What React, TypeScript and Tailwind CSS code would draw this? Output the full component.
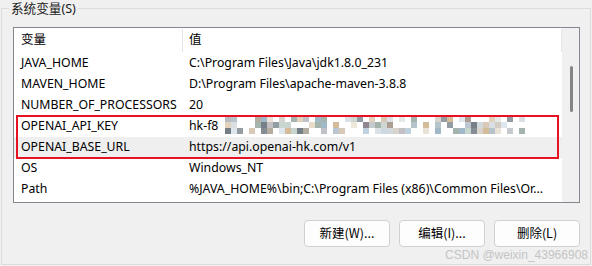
import React from "react";

const rows: { name: string; value: string; selected?: boolean; mosaic?: boolean }[] = [
  { name: "JAVA_HOME", value: "C:\\Program Files\\Java\\jdk1.8.0_231" },
  { name: "MAVEN_HOME", value: "D:\\Program Files\\apache-maven-3.8.8" },
  { name: "NUMBER_OF_PROCESSORS", value: "20" },
  { name: "OPENAI_API_KEY", value: "hk-f8", mosaic: true },
  { name: "OPENAI_BASE_URL", value: "https://api.openai-hk.com/v1", selected: true },
  { name: "OS", value: "Windows_NT" },
  { name: "Path", value: "%JAVA_HOME%\\bin;C:\\Program Files (x86)\\Common Files\\Or..." },
];

const palette = [
  "#8d969e", "#b1a89b", "#bcd0dc", "#9fb0a8", "#d6c6b2", "#7d868e", "#b3c0c8",
  "#e0cfb8", "#9cb4c6", "#a8998b", "#c6d4ce", "#6f7880", "#d2b896", "#b8c3cf",
  "#8a7f8a", "#a7b6bd",
];

function Mosaic() {
  const cells: React.ReactElement[] = [];
  let seed = 987654;
  const rnd = () => {
    seed = (seed * 1103515245 + 12345) % 2147483648;
    return seed / 2147483648;
  };
  const bs = 6;
  for (let r = 0; r < 3; r++) {
    for (let c = 0; c < 50; c++) {
      const p = rnd();
      const edge = c > 46 ? 0.3 : c > 2 && c < 5 ? 0.1 : 0.68;
      if (p < edge) {
        const col = palette[Math.floor(rnd() * palette.length)];
        const light = rnd() < 0.3;
        cells.push(
          <rect
            key={`${r}-${c}`}
            x={c * bs}
            y={r * bs}
            width={bs}
            height={bs}
            fill={col}
            opacity={light ? 0.5 : 0.95}
          />
        );
      }
    }
  }
  return (
    <svg width={300} height={20} className="absolute left-[36px] top-0" aria-hidden>
      {cells}
    </svg>
  );
}

export default function App() {
  const font = { fontFamily: '"Noto Sans", "Noto Sans CJK SC", sans-serif' };
  return (
    <div
      className="w-[592px] h-[266px] bg-[#f0f0f0] text-[12.3px] text-black overflow-hidden relative"
      style={font}
    >
      <div className="pt-[8px] pl-[1px]">
        <div className="relative w-[590px] h-[257px] border border-[#dcdcdc] pl-[11px] pt-[18px]">
          <div className="absolute left-[7px] top-[-9px] px-[2px] bg-[#f0f0f0] text-[12.6px] leading-[18px] text-[#1a1a1a]">
            系统变量(S)
          </div>
          <div className="relative w-[567px] h-[176px] border border-[#828790] bg-white flex">
            <div className="flex-1 flex flex-col">
              <div className="h-[25px] flex items-center relative text-[12.5px]">
                <div className="w-[168px] pl-[7px]">变量</div>
                <div className="w-[1px] h-[23px] bg-[#e5e5e5]" />
                <div className="pl-[6px] flex-1">值</div>
                <div className="w-[1px] h-[23px] bg-[#e5e5e5]" />
              </div>
              {rows.map((r) => (
                <div
                  key={r.name}
                  className={`h-[21px] flex items-center ${r.selected ? "bg-[#efefef]" : ""}`}
                >
                  <div className="w-[175px] pl-[7px] whitespace-nowrap">{r.name}</div>
                  <div className="relative flex-1 whitespace-nowrap h-[21px] flex items-center">
                    {r.value}
                    {r.mosaic && <Mosaic />}
                  </div>
                </div>
              ))}
            </div>
            <div className="w-[17px] bg-[#f0f0f0] relative">
              <div className="absolute left-[8px] top-[38px] w-[3px] h-[46px] bg-[#858585] rounded-full" />
            </div>
            <div className="absolute left-[2px] top-[87px] w-[543px] h-[44px] border-2 border-[#e81123]" />
          </div>
          <div className="flex justify-end gap-[9px] mt-[17px] pr-[10px]">
            {["新建(W)...", "编辑(I)...", "删除(L)"].map((t) => (
              <button
                key={t}
                className="w-[86px] h-[27px] rounded-[4px] border border-[#d0d0d0] bg-[#fdfdfd] text-[12.5px] text-black flex items-center justify-center"
                style={{ fontFamily: '"Noto Sans CJK SC", sans-serif' }}
              >
                {t}
              </button>
            ))}
          </div>
        </div>
      </div>
      <div
        className="absolute right-[4px] bottom-[4px] text-[12px] leading-[14px] text-[#c4c4c4]"
        style={{ fontFamily: '"Liberation Sans", Arial, sans-serif' }}
      >
        CSDN @weixin_43966908
      </div>
    </div>
  );
}
